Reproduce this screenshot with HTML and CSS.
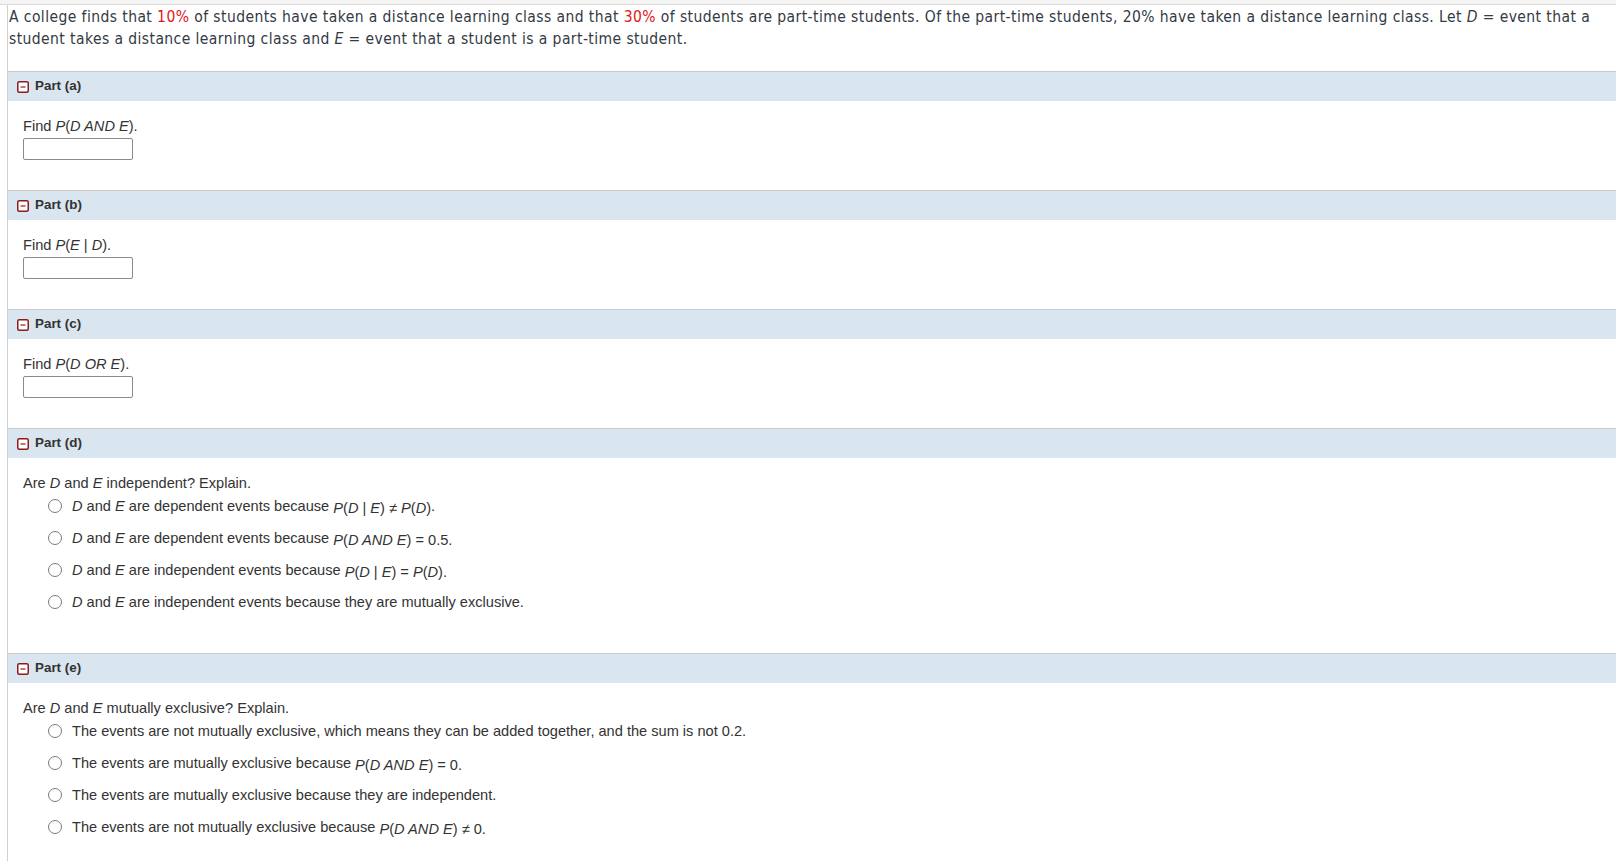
FILE: index.html
```html
<!DOCTYPE html>
<html lang="en">
<head>
<meta charset="utf-8">
<title>Probability question</title>
<link rel="stylesheet" href="styles.css">
</head>
<body>
<div class="topbar"></div>
<main class="page">
  <p class="question">A college finds that <span class="hl">10%</span> of students have taken a distance learning class and that <span class="hl">30%</span> of students are part-time students. Of the part-time students, 20% have taken a distance learning class. Let <i>D</i> = event that a student takes a distance learning class and <i>E</i> = event that a student is a part-time student.</p>

  <section class="part">
    <div class="part-header">
      <svg class="toggle" width="12" height="12" viewBox="0 0 12 12"><rect x="0.75" y="0.75" width="10.5" height="10.5" rx="1.5" fill="#fff" stroke="#8e1b1b" stroke-width="1.5"/><rect x="3.5" y="5.25" width="5" height="1.5" fill="#b04848"/></svg>
      <span>Part (a)</span>
    </div>
    <div class="part-body">
      <div class="prompt">Find <i>P</i>(<i>D AND E</i>).</div>
      <input class="answer" type="text">
    </div>
  </section>

  <section class="part">
    <div class="part-header">
      <svg class="toggle" width="12" height="12" viewBox="0 0 12 12"><rect x="0.75" y="0.75" width="10.5" height="10.5" rx="1.5" fill="#fff" stroke="#8e1b1b" stroke-width="1.5"/><rect x="3.5" y="5.25" width="5" height="1.5" fill="#b04848"/></svg>
      <span>Part (b)</span>
    </div>
    <div class="part-body">
      <div class="prompt">Find <i>P</i>(<i>E</i> | <i>D</i>).</div>
      <input class="answer" type="text">
    </div>
  </section>

  <section class="part">
    <div class="part-header">
      <svg class="toggle" width="12" height="12" viewBox="0 0 12 12"><rect x="0.75" y="0.75" width="10.5" height="10.5" rx="1.5" fill="#fff" stroke="#8e1b1b" stroke-width="1.5"/><rect x="3.5" y="5.25" width="5" height="1.5" fill="#b04848"/></svg>
      <span>Part (c)</span>
    </div>
    <div class="part-body">
      <div class="prompt">Find <i>P</i>(<i>D OR E</i>).</div>
      <input class="answer" type="text">
    </div>
  </section>

  <section class="part">
    <div class="part-header">
      <svg class="toggle" width="12" height="12" viewBox="0 0 12 12"><rect x="0.75" y="0.75" width="10.5" height="10.5" rx="1.5" fill="#fff" stroke="#8e1b1b" stroke-width="1.5"/><rect x="3.5" y="5.25" width="5" height="1.5" fill="#b04848"/></svg>
      <span>Part (d)</span>
    </div>
    <div class="part-body choices">
      <div class="prompt">Are <i>D</i> and <i>E</i> independent? Explain.</div>
      <div class="options">
        <label class="option"><input type="radio" name="d"><span><i>D</i> and <i>E</i> are dependent events because <span class="math"><i>P</i>(<i>D</i> | <i>E</i>) ≠ <i>P</i>(<i>D</i>)</span>.</span></label>
        <label class="option"><input type="radio" name="d"><span><i>D</i> and <i>E</i> are dependent events because <span class="math"><i>P</i>(<i>D AND E</i>) = 0.5.</span></span></label>
        <label class="option"><input type="radio" name="d"><span><i>D</i> and <i>E</i> are independent events because <span class="math"><i>P</i>(<i>D</i> | <i>E</i>) = <i>P</i>(<i>D</i>).</span></span></label>
        <label class="option"><input type="radio" name="d"><span><i>D</i> and <i>E</i> are independent events because they are mutually exclusive.</span></label>
      </div>
    </div>
  </section>

  <section class="part">
    <div class="part-header">
      <svg class="toggle" width="12" height="12" viewBox="0 0 12 12"><rect x="0.75" y="0.75" width="10.5" height="10.5" rx="1.5" fill="#fff" stroke="#8e1b1b" stroke-width="1.5"/><rect x="3.5" y="5.25" width="5" height="1.5" fill="#b04848"/></svg>
      <span>Part (e)</span>
    </div>
    <div class="part-body choices">
      <div class="prompt">Are <i>D</i> and <i>E</i> mutually exclusive? Explain.</div>
      <div class="options">
        <label class="option"><input type="radio" name="e"><span>The events are not mutually exclusive, which means they can be added together, and the sum is not 0.2.</span></label>
        <label class="option"><input type="radio" name="e"><span>The events are mutually exclusive because <span class="math"><i>P</i>(<i>D AND E</i>) = 0.</span></span></label>
        <label class="option"><input type="radio" name="e"><span>The events are mutually exclusive because they are independent.</span></label>
        <label class="option"><input type="radio" name="e"><span>The events are not mutually exclusive because <span class="math"><i>P</i>(<i>D AND E</i>) ≠ 0.</span></span></label>
      </div>
    </div>
  </section>
</main>
</body>
</html>
```

FILE: styles.css
```css
html, body {
  margin: 0;
  padding: 0;
  background: #ffffff;
}

body {
  font-family: "Liberation Sans", Arial, sans-serif;
  color: #333333;
}

.topbar {
  height: 4px;
  background: #f4f4f4;
  border-bottom: 1px solid #dcdcdc;
}

.page {
  display: block;
  margin-left: 7px;
  border-left: 1px solid #cfcfcf;
  min-height: 860px;
}

.question {
  margin: 0;
  padding: 1px 0 21px 1px;
  font-family: "DejaVu Sans Condensed", "DejaVu Sans", sans-serif;
  font-stretch: condensed;
  font-size: 15.5px;
  letter-spacing: 0.42px;
  line-height: 22px;
  color: #333a44;
}

.question i {
  font-style: oblique;
}

.hl {
  color: #e0161b;
}

.part-header {
  display: flex;
  align-items: center;
  gap: 6px;
  height: 29px;
  padding-left: 9px;
  border-top: 1px solid #c9c9c9;
  background: #d9e5ef;
  font-weight: bold;
  font-size: 13.4px;
  color: #333333;
}

.part-header span {
  position: relative;
  top: -1px;
}

.toggle {
  display: block;
  flex: none;
}

.part-body {
  padding: 15px 0 30px 15px;
  font-size: 14.6px;
  line-height: 20px;
}

.part-body.choices {
  padding-bottom: 35px;
}

.answer {
  display: block;
  width: 110px;
  height: 22px;
  margin: 2px 0 0 0;
  box-sizing: border-box;
  border: 1px solid #8a8a8a;
  border-radius: 2px;
  background: #fff;
  font: inherit;
  padding: 0 4px;
}

.options {
  margin-top: -3px;
}

.option {
  display: flex;
  align-items: center;
  gap: 10px;
  height: 32px;
  padding-left: 25px;
}

.option input {
  appearance: none;
  -webkit-appearance: none;
  margin: 0;
  width: 14px;
  height: 14px;
  flex: none;
  box-sizing: border-box;
  border: 1px solid #7a7a7a;
  border-radius: 50%;
  background: #fff;
}

.math {
  position: relative;
  top: 2px;
}
```
